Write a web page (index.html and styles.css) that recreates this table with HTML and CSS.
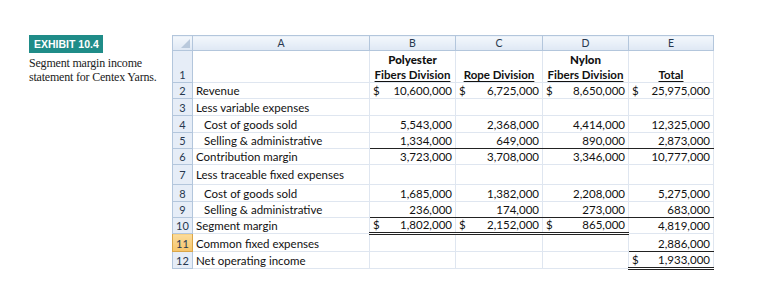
FILE: index.html
```html
<!DOCTYPE html>
<html lang="en">
<head>
    <meta charset="UTF-8">
    <title>Exhibit 10.4</title>
    <link rel="stylesheet" href="styles.css">
</head>
<body>

    <div class="page">

        <!-- Exhibit caption -->
        <div class="exhibit">
            <div class="exhibit-tag">EXHIBIT 10.4</div>
            <p class="exhibit-text">Segment margin income<br>statement for Centex Yarns.</p>
        </div>

        <!-- Spreadsheet -->
        <table class="sheet">
            <colgroup>
                <col class="c-num">
                <col class="c-a">
                <col class="c-b">
                <col class="c-c">
                <col class="c-d">
                <col class="c-e">
            </colgroup>
            <tr class="r-head">
                <th class="corner"><span class="tri"></span></th>
                <th>A</th>
                <th>B</th>
                <th>C</th>
                <th>D</th>
                <th>E</th>
            </tr>
            <tr class="r-title">
                <td class="rn">1</td>
                <td></td>
                <td class="title"><b>Polyester</b><br><u>Fibers Division</u></td>
                <td class="title"><u>Rope Division</u></td>
                <td class="title"><b>Nylon</b><br><u>Fibers Division</u></td>
                <td class="title"><u>Total</u></td>
            </tr>
            <tr class="r2">
                <td class="rn">2</td>
                <td>Revenue</td>
                <td class="num"><span class="cur">$</span>10,600,000</td>
                <td class="num"><span class="cur">$</span>6,725,000</td>
                <td class="num"><span class="cur">$</span>8,650,000</td>
                <td class="num"><span class="cur">$</span>25,975,000</td>
            </tr>
            <tr class="r3">
                <td class="rn">3</td>
                <td>Less variable expenses</td>
                <td></td><td></td><td></td><td></td>
            </tr>
            <tr class="r4">
                <td class="rn">4</td>
                <td class="ind">Cost of goods sold</td>
                <td class="num">5,543,000</td>
                <td class="num">2,368,000</td>
                <td class="num">4,414,000</td>
                <td class="num">12,325,000</td>
            </tr>
            <tr class="r5">
                <td class="rn">5</td>
                <td class="ind">Selling &amp; administrative</td>
                <td class="num line">1,334,000</td>
                <td class="num line">649,000</td>
                <td class="num line">890,000</td>
                <td class="num line">2,873,000</td>
            </tr>
            <tr class="r6">
                <td class="rn">6</td>
                <td>Contribution margin</td>
                <td class="num">3,723,000</td>
                <td class="num">3,708,000</td>
                <td class="num">3,346,000</td>
                <td class="num">10,777,000</td>
            </tr>
            <tr class="r7">
                <td class="rn">7</td>
                <td>Less traceable fixed expenses</td>
                <td></td><td></td><td></td><td></td>
            </tr>
            <tr class="r8">
                <td class="rn">8</td>
                <td class="ind">Cost of goods sold</td>
                <td class="num">1,685,000</td>
                <td class="num">1,382,000</td>
                <td class="num">2,208,000</td>
                <td class="num">5,275,000</td>
            </tr>
            <tr class="r9">
                <td class="rn">9</td>
                <td class="ind">Selling &amp; administrative</td>
                <td class="num line">236,000</td>
                <td class="num line">174,000</td>
                <td class="num line">273,000</td>
                <td class="num line">683,000</td>
            </tr>
            <tr class="r10">
                <td class="rn">10</td>
                <td>Segment margin</td>
                <td class="num dbl"><span class="cur">$</span>1,802,000</td>
                <td class="num dbl"><span class="cur">$</span>2,152,000</td>
                <td class="num dbl"><span class="cur">$</span>865,000</td>
                <td class="num">4,819,000</td>
            </tr>
            <tr class="r11">
                <td class="rn sel">11</td>
                <td>Common fixed expenses</td>
                <td></td><td></td><td></td>
                <td class="num line">2,886,000</td>
            </tr>
            <tr class="r12">
                <td class="rn">12</td>
                <td>Net operating income</td>
                <td></td><td></td><td></td>
                <td class="num dbl"><span class="cur">$</span>1,933,000</td>
            </tr>
        </table>

    </div>

</body>
</html>
```

FILE: styles.css
```css
body {
    margin: 0;
    background-color: #ffffff;
    color: #111111;
}
.page {
    display: flex;
    padding: 35px 0 0 29px;
}
/* Left caption */
.exhibit {
    width: 143px;
}
.exhibit-tag {
    width: 74px;
    height: 18px;
    box-sizing: border-box;
    padding-left: 5px;
    background-color: #1f8c88;
    color: white;
    font-family: 'Liberation Sans', sans-serif;
    font-weight: bold;
    font-size: 10.5px;
    line-height: 18px;
    white-space: nowrap;
}
.exhibit-text {
    margin: 3px 0 0 0;
    font-family: 'Liberation Serif', serif;
    font-size: 12px;
    line-height: 14px;
    color: #222222;
    letter-spacing: -0.2px;
}
/* Spreadsheet */
.sheet {
    border-collapse: collapse;
    table-layout: fixed;
    font-family: 'Lato', sans-serif;
    font-size: 11.5px;
    color: #111111;
}
.c-num { width: 20px; }
.c-a { width: 177px; }
.c-b { width: 86px; }
.c-c { width: 87px; }
.c-d { width: 86px; }
.c-e { width: 85px; }
.sheet td {
    border: 1px solid #dfe6f0;
    padding: 0 3px;
    vertical-align: bottom;
    white-space: nowrap;
    line-height: 14px;
}
.sheet th {
    height: 14px;
    padding: 0;
    border: 1px solid #b3c6dc;
    background: linear-gradient(#f3f7fc, #dee8f4);
    font-weight: normal;
    font-size: 10.5px;
    color: #27384f;
    line-height: 13px;
}
.corner {
    position: relative;
}
.tri {
    position: absolute;
    right: 2px;
    bottom: 2px;
    width: 0;
    height: 0;
    border-left: 9px solid transparent;
    border-bottom: 9px solid #b9c9dc;
}
.sheet td.rn {
    padding: 0;
    text-align: center;
    background-color: #e6edf7;
    border-color: #b3c6dc;
    color: #27384f;
    font-size: 11px;
}
.sheet td.sel {
    background: linear-gradient(#fbdc9c, #f6c56a);
    border-color: #d9a64a;
}
.ind {
    padding-left: 11px !important;
}
.title {
    text-align: center;
    font-weight: bold;
    line-height: 15px !important;
}
.title u {
    text-underline-offset: 2px;
}
.num {
    text-align: right;
}
.cur {
    float: left;
}
.sheet td.line {
    border-bottom: 1px solid #222222;
}
.sheet td.dbl {
    border-bottom: 3px double #222222;
}
/* Row heights */
.r-title td { height: 31px; }
.r2 td { height: 15px; }
.r3 td, .r4 td, .r8 td, .r11 td { height: 16px; }
.r5 td, .r6 td, .r9 td { height: 15px; }
.r10 td { height: 14px; }
.r12 td { height: 15px; }
.r7 td { height: 19px; vertical-align: middle; }
```
